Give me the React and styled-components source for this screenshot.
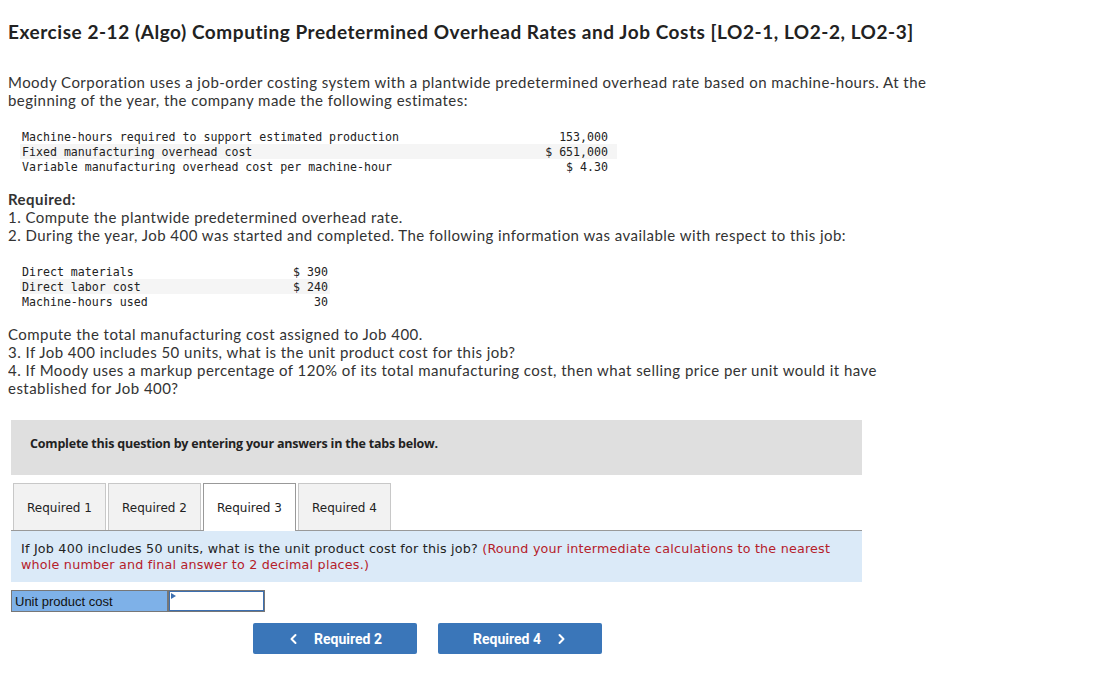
import React from "react";
import styled, { createGlobalStyle } from "styled-components";

const GlobalStyle = createGlobalStyle`
  body {
    margin: 8px;
    background: #fff;
    color: #333;
    font-family: "Lato", "Open Sans", sans-serif;
  }
`;

const estimates = [
  ["Machine-hours required to support estimated production", "153,000"],
  ["Fixed manufacturing overhead cost", "$ 651,000"],
  ["Variable manufacturing overhead cost per machine-hour", "$ 4.30"],
];

const jobData = [
  ["Direct materials", "$ 390"],
  ["Direct labor cost", "$ 240"],
  ["Machine-hours used", "30"],
];

const tabs = ["Required 1", "Required 2", "Required 3", "Required 4"];

const Chevron = ({ dir }) => (
  <svg width="12" height="12" viewBox="0 0 24 24" fill="none" stroke="#fff" strokeWidth="4" strokeLinecap="round" strokeLinejoin="round">
    {dir === "left" ? <path d="M15 4l-8 8 8 8" /> : <path d="M9 4l8 8-8 8" />}
  </svg>
);

export default function App() {
  return (
    <Page>
      <GlobalStyle />
      <Title>Exercise 2-12 (Algo) Computing Predetermined Overhead Rates and Job Costs [LO2-1, LO2-2, LO2-3]</Title>

      <Para $top={30}>
        Moody Corporation uses a job-order costing system with a plantwide predetermined overhead rate based on machine-hours. At the
        beginning of the year, the company made the following estimates:
      </Para>

      <DataTable $width={597} $top={20}>
        <tbody>
          {estimates.map(([label, value]) => (
            <tr key={label}>
              <LabelCell>{label}</LabelCell>
              <ValueCell>{value}</ValueCell>
            </tr>
          ))}
        </tbody>
      </DataTable>

      <Para $top={16}>
        <strong>Required:</strong>
        <br />
        1. Compute the plantwide predetermined overhead rate.
        <br />
        2. During the year, Job 400 was started and completed. The following information was available with respect to this job:
      </Para>

      <DataTable $width={310} $top={20}>
        <tbody>
          {jobData.map(([label, value]) => (
            <tr key={label}>
              <LabelCell>{label}</LabelCell>
              <ValueCell $pad={2}>{value}</ValueCell>
            </tr>
          ))}
        </tbody>
      </DataTable>

      <Para $top={16}>
        Compute the total manufacturing cost assigned to Job 400.
        <br />
        3. If Job 400 includes 50 units, what is the unit product cost for this job?
        <br />
        4. If Moody uses a markup percentage of 120% of its total manufacturing cost, then what selling price per unit would it have
        established for Job 400?
      </Para>

      <Panel>
        <Instruction>Complete this question by entering your answers in the tabs below.</Instruction>

        <TabRow>
          {tabs.map((t) => (
            <Tab key={t} $active={t === "Required 3"}>
              {t}
            </Tab>
          ))}
        </TabRow>

        <QuestionBox>
          If Job 400 includes 50 units, what is the unit product cost for this job?{" "}
          <Hint>(Round your intermediate calculations to the nearest whole number and final answer to 2 decimal places.)</Hint>
        </QuestionBox>

        <AnswerRow>
          <AnswerLabel>Unit product cost</AnswerLabel>
          <AnswerInput>
            <input type="text" />
          </AnswerInput>
        </AnswerRow>

        <NavRow>
          <NavButton>
            <Chevron dir="left" />
            <span>Required 2</span>
          </NavButton>
          <NavButton>
            <span>Required 4</span>
            <Chevron dir="right" />
          </NavButton>
        </NavRow>
      </Panel>
    </Page>
  );
}

const Page = styled.div`
  width: 935px;
`;

const Title = styled.h1`
  margin: 13px 0 0;
  font-size: 19px;
  line-height: 22px;
  letter-spacing: 0.55px;
  font-weight: 700;
  color: #222;
`;

const Para = styled.p`
  margin: ${(p) => p.$top}px 0 0;
  font-size: 15px;
  line-height: 18px;
  letter-spacing: 0.46px;
  color: #333;

  strong {
    font-weight: 700;
  }
`;

const DataTable = styled.table`
  margin: ${(p) => p.$top}px 0 0 12px;
  width: ${(p) => p.$width}px;
  border-collapse: collapse;
  font-family: "DejaVu Sans Mono", "Liberation Mono", monospace;
  font-size: 11.6px;
  color: #222;

  tr:nth-child(2) {
    background: #f5f5f5;
  }
`;

const LabelCell = styled.td`
  height: 15px;
  padding: 0 0 0 2px;
  white-space: pre;
`;

const ValueCell = styled.td`
  height: 15px;
  padding: 0 ${(p) => p.$pad ?? 9}px 0 0;
  text-align: right;
  white-space: pre;
`;

const Panel = styled.div`
  margin: 23px 0 0 3px;
  width: 851px;
`;

const Instruction = styled.div`
  height: 55px;
  box-sizing: border-box;
  padding: 15px 0 0 19px;
  background: #dfdfdf;
  font-family: "Open Sans", sans-serif;
  font-size: 12.5px;
  letter-spacing: -0.2px;
  font-weight: 700;
  color: #222;
`;

const TabRow = styled.div`
  display: flex;
  gap: 2px;
  margin-top: 8px;
  padding-left: 2px;
  border-bottom: 1px solid #999;
`;

const Tab = styled.div`
  width: 93px;
  box-sizing: border-box;
  display: flex;
  align-items: center;
  justify-content: center;
  padding-top: 1px;
  border: 1px solid ${(p) => (p.$active ? "#999" : "#c8c8c8")};
  border-bottom: none;
  background: ${(p) => (p.$active ? "#fff" : "#f2f2f2")};
  margin-bottom: ${(p) => (p.$active ? "-1px" : "0")};
  height: ${(p) => (p.$active ? "48px" : "47px")};
  font-family: "DejaVu Sans", Verdana, sans-serif;
  font-size: 12px;
  color: #222;
`;

const QuestionBox = styled.div`
  height: 51px;
  box-sizing: border-box;
  padding: 10px 14px 0 10px;
  background: #dbeaf8;
  font-family: "DejaVu Sans", Verdana, sans-serif;
  font-size: 12.7px;
  letter-spacing: 0.22px;
  line-height: 16px;
  color: #222;
`;

const Hint = styled.span`
  color: #b5202a;
`;

const AnswerRow = styled.div`
  display: flex;
  margin-top: 8px;
  height: 22px;
`;

const AnswerLabel = styled.div`
  width: 157px;
  box-sizing: border-box;
  display: flex;
  align-items: center;
  padding-left: 3px;
  background: #7eb1e8;
  border: 1px solid #777;
  font-family: "Liberation Sans", Arial, sans-serif;
  font-size: 13px;
  color: #111;
`;

const AnswerInput = styled.div`
  position: relative;
  width: 97px;
  box-sizing: border-box;
  border: 1px solid #777;
  background: #3c6fb0;
  padding: 1px;

  input {
    display: block;
    width: 100%;
    height: 100%;
    box-sizing: border-box;
    border: none;
    outline: none;
    padding: 0 4px;
    background: #fff;
  }

  &::after {
    content: "";
    position: absolute;
    top: 2px;
    left: 2px;
    border-top: 3px solid transparent;
    border-bottom: 3px solid transparent;
    border-left: 5px solid #3c6fb0;
  }
`;

const NavRow = styled.div`
  display: flex;
  gap: 21px;
  margin: 11px 0 0 242px;
`;

const NavButton = styled.button`
  width: 164px;
  height: 31px;
  display: flex;
  align-items: center;
  justify-content: center;
  gap: 14px;
  border: none;
  border-radius: 2px;
  background: #3a76b9;
  color: #fff;
  font-family: "Roboto", sans-serif;
  font-size: 14px;
  font-weight: 700;
  cursor: pointer;
`;
